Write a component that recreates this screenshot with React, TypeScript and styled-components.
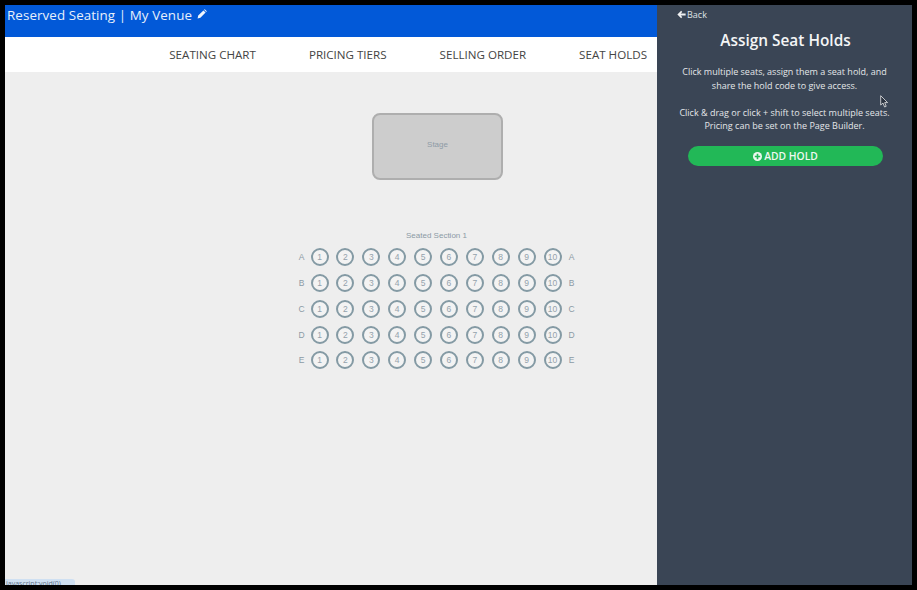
import React from "react";
import styled, { createGlobalStyle } from "styled-components";

const Global = createGlobalStyle`
  html, body { margin: 0; padding: 0; background: #000; }
  body { font-family: "Open Sans", "Liberation Sans", sans-serif; }
`;

const Frame = styled.div`
  width: 917px;
  height: 590px;
  box-sizing: border-box;
  padding: 5px;
  background: #000;
  overflow: hidden;
`;
const Windowed = styled.div`
  position: relative;
  display: flex;
  width: 907px;
  height: 580px;
  overflow: hidden;
`;
const Main = styled.div`
  width: 652px;
  display: flex;
  flex-direction: column;
  background: #eeeeee;
`;
const TitleBar = styled.header`
  height: 32px;
  flex: none;
  display: flex;
  align-items: flex-start;
  gap: 5px;
  padding: 0 0 0 2px;
  box-sizing: border-box;
  background: #0259d8;
  color: #e8f0fb;
  font-size: 13.35px;
  line-height: 20px;
  letter-spacing: 0.1px;
`;
const Pencil = styled.svg`
  width: 10px;
  height: 10px;
  margin-top: 4px;
  fill: #f1f5fc;
`;
const Nav = styled.nav`
  height: 35px;
  flex: none;
  display: flex;
  align-items: center;
  justify-content: flex-end;
  gap: 53px;
  padding: 0 10px 1px 0;
  box-sizing: border-box;
  background: #ffffff;
  color: #444;
  font-size: 11.6px;
`;
const Canvas = styled.div`
  position: relative;
  flex: 1;
  display: flex;
  flex-direction: column;
  align-items: flex-start;
  padding: 41px 0 0 367px;
  box-sizing: border-box;
`;
const Stage = styled.div`
  width: 131px;
  height: 67px;
  box-sizing: border-box;
  display: flex;
  align-items: center;
  justify-content: center;
  padding-bottom: 4px;
  background: #cdcdcd;
  border: 2px solid #aeaeae;
  border-radius: 8px;
  color: #8d9ba6;
  font-family: "Liberation Sans", Arial, sans-serif;
  font-size: 8px;
`;
const Section = styled.section`
  margin: 50px 0 0 -79.5px;
  width: 278px;
  display: flex;
  flex-direction: column;
  color: #8b9aa5;
  font-family: "Liberation Sans", Arial, sans-serif;
`;
const SectionTitle = styled.div`
  height: 12px;
  line-height: 12px;
  font-size: 8px;
  text-align: center;
  margin-bottom: 6px;
  padding-left: 10px;
`;
const Row = styled.div`
  height: 25.85px;
  display: flex;
  align-items: flex-start;
`;
const RowLabel = styled.span`
  width: 18px;
  height: 18px;
  line-height: 18px;
  flex: none;
  font-size: 8.5px;
  text-align: center;
`;
const Seats = styled.div`
  display: flex;
  gap: 7.9px;
  margin: 0 1px 0 0;
`;
const Seat = styled.span`
  width: 18px;
  height: 18px;
  box-sizing: border-box;
  display: flex;
  align-items: center;
  justify-content: center;
  border: 2px solid #849aa4;
  border-radius: 50%;
  background: #f3f3f3;
  color: #94a2ac;
  font-size: 8.5px;
`;
const Tooltip = styled.div`
  position: absolute;
  left: 0;
  bottom: 0;
  width: 69px;
  height: 6px;
  background: #cfe0f2;
  border-top-right-radius: 3px;
  color: #63748a;
  font-size: 7px;
  line-height: 9px;
  white-space: nowrap;
  overflow: hidden;
  padding-left: 1px;
`;
const Side = styled.aside`
  width: 255px;
  flex: none;
  box-sizing: border-box;
  padding: 2px 0 0 2px;
  background: #3a4555;
  color: #f0f1f3;
  display: flex;
  flex-direction: column;
  align-items: center;
`;
const Back = styled.div`
  align-self: flex-start;
  margin-left: 18px;
  display: flex;
  align-items: center;
  gap: 1px;
  height: 14px;
  font-size: 9px;
  color: #dfe2e6;
`;
const Heading = styled.h1`
  margin: 8px 0 0;
  font-size: 15.4px;
  line-height: 24px;
  font-weight: 600;
  color: #f4f5f6;
`;
const Para = styled.p`
  margin: 0 0 13.5px -2px;
  font-size: 9px;
  line-height: 13.5px;
  text-align: center;
  color: #e4e6e9;
  white-space: nowrap;
  &:first-of-type { margin-top: 12px; }
`;
const AddButton = styled.button`
  width: 195px;
  height: 20px;
  border: none;
  border-radius: 10px;
  background: #22b857;
  color: #eef8f1;
  font-family: inherit;
  font-size: 10.3px;
  font-weight: 600;
  display: flex;
  align-items: center;
  justify-content: center;
  gap: 2px;
  padding: 0;
`;
const Cursor = styled.svg`
  position: absolute;
  left: 875px;
  top: 90px;
  width: 9px;
  height: 13px;
`;

const rows = ["A", "B", "C", "D", "E"];
const numbers = [1, 2, 3, 4, 5, 6, 7, 8, 9, 10];

export default function App() {
  return (
    <Frame>
      <Global />
      <Windowed>
        <Main>
          <TitleBar>
            <span>Reserved Seating | My Venue</span>
            <Pencil viewBox="0 0 10 10">
              <path d="M0.6 9.4 1.2 6.6 6.4 1.4 8.6 3.6 3.4 8.8Z M7 0.8 7.8 0.2 9.8 2.2 9.2 3Z" />
            </Pencil>
          </TitleBar>
          <Nav>
            <span>SEATING CHART</span>
            <span>PRICING TIERS</span>
            <span>SELLING ORDER</span>
            <span>SEAT HOLDS</span>
          </Nav>
          <Canvas>
            <Stage>Stage</Stage>
            <Section>
              <SectionTitle>Seated Section 1</SectionTitle>
              {rows.map((r) => (
                <Row key={r}>
                  <RowLabel>{r}</RowLabel>
                  <Seats>
                    {numbers.map((n) => (
                      <Seat key={n}>{n}</Seat>
                    ))}
                  </Seats>
                  <RowLabel>{r}</RowLabel>
                </Row>
              ))}
            </Section>
            <Tooltip>javascript:void(0)</Tooltip>
          </Canvas>
        </Main>
        <Side>
          <Back>
            <svg width="9" height="9" viewBox="0 0 10 10" fill="#f0f1f3">
              <path d="M0.4 5 4.6 0.9 5.9 2.2 4 4H9.6V6H4L5.9 7.8 4.6 9.1Z" />
            </svg>
            <span>Back</span>
          </Back>
          <Heading>Assign Seat Holds</Heading>
          <Para>
            Click multiple seats, assign them a seat hold, and
            <br />
            share the hold code to give access.
          </Para>
          <Para>
            Click &amp; drag or click + shift to select multiple seats.
            <br />
            Pricing can be set on the Page Builder.
          </Para>
          <AddButton>
            <svg width="9" height="9" viewBox="0 0 10 10">
              <circle cx="5" cy="5" r="5" fill="#eef8f1" />
              <path d="M4.1 2H5.9V4.1H8V5.9H5.9V8H4.1V5.9H2V4.1H4.1Z" fill="#22b857" />
            </svg>
            <span>ADD HOLD</span>
          </AddButton>
        </Side>
        <Cursor viewBox="0 0 9 13">
          <path d="M0.7 0.7V10L3 8 4.6 12 6.2 11.3 4.7 7.6H7.6Z" fill="#2b3340" stroke="#e8e8e8" strokeWidth="0.8" />
        </Cursor>
      </Windowed>
    </Frame>
  );
}
